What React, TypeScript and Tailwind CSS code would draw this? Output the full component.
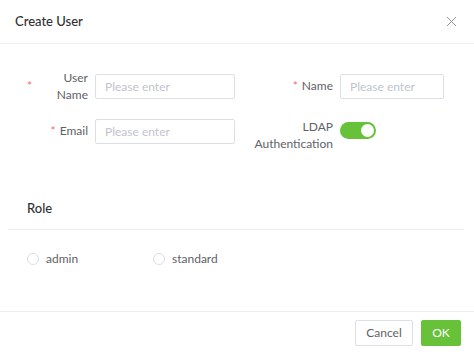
function Required() {
  return <span className="text-[#f56c6c] text-[12px] leading-none">*</span>;
}

function TextInput() {
  return (
    <input
      placeholder="Please enter"
      className="h-[25px] w-full rounded-[2px] border border-[#dcdfe6] bg-white px-[9px] text-[12px] text-[#606266] outline-none placeholder:text-[#c0c4cc]"
    />
  );
}

function Radio({ label, width }: { label: string; width: string }) {
  return (
    <label className={`flex items-center gap-[7px] ${width}`}>
      <span className="h-[12px] w-[12px] rounded-full border border-[#dcdfe6] bg-white" />
      <span className="text-[12px] text-[#606266]">{label}</span>
    </label>
  );
}

export default function App() {
  return (
    <div className="flex h-[352px] w-[474px] flex-col bg-white font-['Lato',sans-serif] text-[#606266]">
      <header className="flex h-[44px] shrink-0 items-center justify-between border-b border-[#ebeef5] pl-[15px] pr-[17px]">
        <h2 className="text-[13px] font-medium text-[#303133]">Create User</h2>
        <svg width="11" height="11" viewBox="0 0 11 11" className="text-[#909399]">
          <path d="M1 1L10 10M10 1L1 10" stroke="currentColor" strokeWidth="1" />
        </svg>
      </header>

      <div className="pt-[25px]">
        <div className="flex h-[34px] items-center">
          <div className="ml-[27px] flex w-[61px] items-center justify-between">
            <Required />
            <span className="text-right text-[12px] leading-[17px]">User<br />Name</span>
          </div>
          <div className="ml-[7px] w-[140px]"><TextInput /></div>
          <div className="ml-[18px] flex w-[80px] items-center justify-end gap-[4px]">
            <Required />
            <span className="text-[12px]">Name</span>
          </div>
          <div className="ml-[7px] w-[104px]"><TextInput /></div>
        </div>

        <div className="mt-[15px] flex items-start">
          <div className="ml-[27px] flex h-[25px] w-[61px] items-center justify-end gap-[4px]">
            <Required />
            <span className="text-[12px]">Email</span>
          </div>
          <div className="ml-[7px] w-[140px]"><TextInput /></div>
          <div className="ml-[18px] w-[80px] text-right text-[12px] leading-[17px]">
            LDAP<br />Authentication
          </div>
          <div className="ml-[7px] mt-[4px] flex h-[17px] w-[36px] items-center justify-end rounded-full bg-[#67c23a] px-[2px]">
            <span className="h-[13px] w-[13px] rounded-full bg-white" />
          </div>
        </div>
      </div>

      <div className="ml-[27px] mt-[46px] h-[20px] text-[13px] font-medium leading-[20px] text-[#303133]">Role</div>
      <div className="ml-[8px] mr-[10px] mt-[11px] border-t border-[#ebeef5]" />
      <div className="ml-[27px] mt-[20px] flex">
        <Radio label="admin" width="w-[126px]" />
        <Radio label="standard" width="w-auto" />
      </div>

      <footer className="mt-auto flex h-[41px] items-start justify-end gap-[8px] border-t border-[#ebeef5] pr-[13px] pt-[8px]">
        <button className="h-[26px] w-[58px] rounded-[2px] border border-[#dcdfe6] bg-white text-[12px] text-[#606266]">Cancel</button>
        <button className="h-[26px] w-[40px] rounded-[2px] bg-[#67c23a] text-[12px] text-white">OK</button>
      </footer>
    </div>
  );
}
